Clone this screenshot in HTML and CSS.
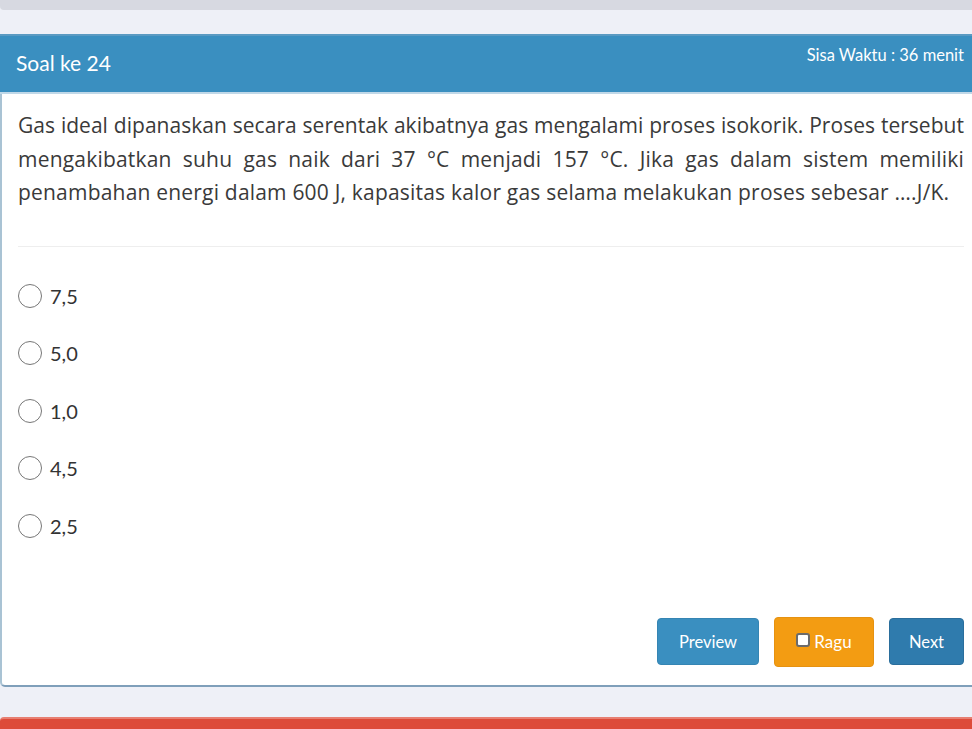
FILE: index.html
```html
<!DOCTYPE html>
<html>
<head>
<meta charset="utf-8">
<link rel="stylesheet" href="styles.css">
</head>
<body>
<div class="topbar"></div>
<div class="card">
  <div class="card-header">
    <div class="title">Soal ke 24</div>
    <div class="timer">Sisa Waktu : 36 menit</div>
  </div>
  <div class="card-body">
    <p class="question"><span class="line justified tight">Gas ideal dipanaskan secara serentak akibatnya gas mengalami proses isokorik. Proses tersebut</span> <span class="line justified">mengakibatkan suhu gas naik dari 37 °C menjadi 157 °C. Jika gas dalam sistem memiliki</span> <span class="line">penambahan energi dalam 600 J, kapasitas kalor gas selama melakukan proses sebesar ….J/K.</span></p>
    <div class="divider"></div>
    <ul class="options">
      <li class="option"><span class="radio"></span><span class="label">7,5</span></li>
      <li class="option"><span class="radio"></span><span class="label">5,0</span></li>
      <li class="option"><span class="radio"></span><span class="label">1,0</span></li>
      <li class="option"><span class="radio"></span><span class="label">4,5</span></li>
      <li class="option"><span class="radio"></span><span class="label">2,5</span></li>
    </ul>
    <div class="actions">
      <button class="btn btn-preview">Preview</button>
      <button class="btn btn-ragu"><span class="check"></span>Ragu</button>
      <button class="btn btn-next">Next</button>
    </div>
  </div>
</div>
<div class="redbar"></div>
</body>
</html>
```
FILE: styles.css
```css
html, body {
  margin: 0;
  padding: 0;
}
body {
  background: #eef0f7;
  font-family: "Lato", "Open Sans", sans-serif;
  color: #333;
  overflow: hidden;
  height: 729px;
}
.topbar {
  height: 10px;
  background: #d7d9e1;
  border-bottom-left-radius: 4px;
}
.card {
  margin-top: 24px;
  background: #fff;
  border-left: 2px solid #a9c3d4;
  border-bottom: 2px solid #7f9fba;
  border-bottom-left-radius: 5px;
}
.card-header {
  background: #3a8fc0;
  border-top: 2px solid #5a9ac2;
  border-bottom: 2px solid #c0d8e8;
  height: 56px;
  display: flex;
  justify-content: space-between;
  align-items: flex-start;
  padding: 0 8px 0 16px;
  color: #fff;
  margin-left: -2px;
}
.title {
  font-size: 21px;
  margin-top: 14px;
}
.timer {
  font-size: 16.5px;
  margin-top: 9px;
}
.card-body {
  padding: 0 8px 18px 16px;
}
.question {
  margin: 0;
  padding-top: 15px;
  font-family: "Open Sans", sans-serif;
  font-size: 21px;
  letter-spacing: 0.2px;
  line-height: 33.5px;
  color: #3a3a3a;
}
.line {
  display: block;
  white-space: nowrap;
}
.justified {
  text-align: justify;
  text-align-last: justify;
}
.tight {
  letter-spacing: 0.03px;
}
.divider {
  height: 1px;
  background: #eeeeee;
  margin-top: 36px;
}
.options {
  list-style: none;
  margin: 37px 0 0 0;
  padding: 0;
}
.option {
  display: flex;
  align-items: center;
  height: 24px;
  margin-bottom: 33.5px;
}
.radio {
  border: 1.6px solid #777;
  border-radius: 50%;
  box-sizing: border-box;
  width: 24px;
  height: 24px;
}
.label {
  font-size: 20px;
  margin-left: 8px;
}
.actions {
  display: flex;
  justify-content: flex-end;
  align-items: center;
  gap: 15px;
  margin-top: 79px;
}
.btn {
  font-family: inherit;
  font-size: 16.5px;
  color: #fff;
  border: 1px solid transparent;
  border-radius: 4px;
  height: 47px;
  padding: 0 20px;
  display: flex;
  align-items: center;
}
.btn-preview {
  background: #3a8fc0;
  border-color: #3585b3;
  width: 102px;
  justify-content: center;
}
.btn-ragu {
  background: #f39c12;
  border-color: #e69211;
  height: 50px;
  width: 100px;
  justify-content: center;
  padding: 0;
  font-size: 17px;
}
.check {
  width: 14px;
  height: 14px;
  background: #fff;
  border: 2px solid #6b6b6b;
  border-radius: 3px;
  margin-right: 4px;
  margin-top: -4px;
  box-sizing: border-box;
}
.btn-next {
  background: #2f7bad;
  border-color: #2a6e9c;
  width: 75px;
  justify-content: center;
  padding: 0;
}
.redbar {
  margin-top: 30px;
  height: 20px;
  background: #dd4b39;
  border-top: 2px solid #e77f72;
  border-top-left-radius: 4px;
}
```
